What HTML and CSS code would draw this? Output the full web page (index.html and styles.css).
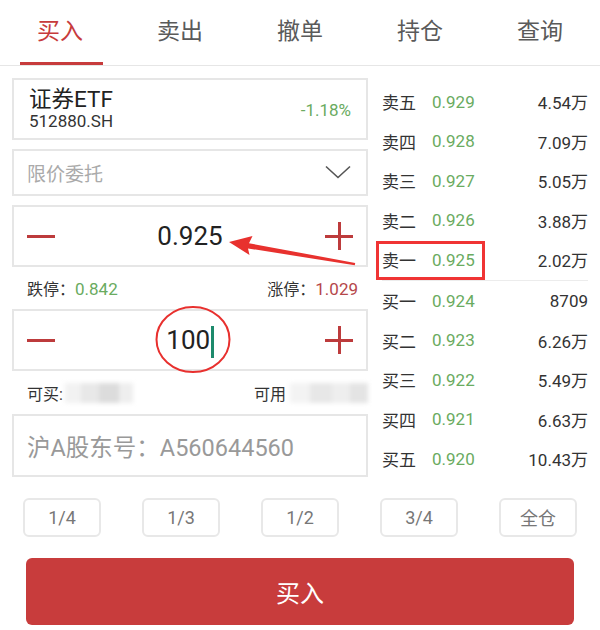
FILE: index.html
```html
<!DOCTYPE html>
<html lang="zh-CN">
<head>
<meta charset="utf-8">
<title>买入</title>
<link rel="stylesheet" href="styles.css">
</head>
<body>
<div class="tabs">
  <div class="tab active">买入</div>
  <div class="tab">卖出</div>
  <div class="tab">撤单</div>
  <div class="tab">持仓</div>
  <div class="tab">查询</div>
</div>

<div class="main">
  <div class="left">
    <div class="box stock">
      <div class="stock-info">
        <div class="stock-name">证券ETF</div>
        <div class="stock-code">512880.SH</div>
      </div>
      <div class="stock-chg">-1.18%</div>
    </div>

    <div class="box type">
      <span class="type-text">限价委托</span>
      <svg class="chev" width="26" height="14" viewBox="0 0 26 14"><path d="M1 1.5 L13 12.5 L25 1.5" fill="none" stroke="#555" stroke-width="1.6"/></svg>
    </div>

    <div class="box stepper">
      <span class="minus"></span>
      <span class="value">0.925</span>
      <span class="plus"></span>
    </div>

    <div class="limits">
      <span class="lim">跌停：<span class="green">0.842</span></span>
      <span class="lim">涨停：<span class="red">1.029</span></span>
    </div>

    <div class="box stepper">
      <span class="minus"></span>
      <span class="value">100<span class="cursor"></span></span>
      <span class="plus"></span>
    </div>

    <div class="avail">
      <span class="av">可买:<span class="blur b1"><i></i><i></i><i></i><i></i></span></span>
      <span class="av">可用<span class="blur b2"><i></i><i></i><i></i><i></i></span></span>
    </div>

    <div class="box account">沪A股东号：A560644560</div>

    <svg class="marks" width="356" height="411" viewBox="12 66 356 411">
      <polygon points="229,242 252.5,236 249,243.2 355.2,263 354.8,265.2 248,248.4 249.5,255" fill="#e8312e"/>
      <ellipse cx="193" cy="339.5" rx="36.5" ry="32.5" fill="none" stroke="#e8302e" stroke-width="2"/>
    </svg>
  </div>

  <div class="book">
    <div class="group">
      <div class="row"><span class="lbl">卖五</span><span class="px">0.929</span><span class="vol">4.54万</span></div>
      <div class="row"><span class="lbl">卖四</span><span class="px">0.928</span><span class="vol">7.09万</span></div>
      <div class="row"><span class="lbl">卖三</span><span class="px">0.927</span><span class="vol">5.05万</span></div>
      <div class="row"><span class="lbl">卖二</span><span class="px">0.926</span><span class="vol">3.88万</span></div>
      <div class="row hl"><span class="lbl">卖一</span><span class="px">0.925</span><span class="vol">2.02万</span><span class="hlbox"></span></div>
    </div>
    <div class="group buy">
      <div class="row"><span class="lbl">买一</span><span class="px">0.924</span><span class="vol">8709</span></div>
      <div class="row"><span class="lbl">买二</span><span class="px">0.923</span><span class="vol">6.26万</span></div>
      <div class="row"><span class="lbl">买三</span><span class="px">0.922</span><span class="vol">5.49万</span></div>
      <div class="row"><span class="lbl">买四</span><span class="px">0.921</span><span class="vol">6.63万</span></div>
      <div class="row"><span class="lbl">买五</span><span class="px">0.920</span><span class="vol">10.43万</span></div>
    </div>
  </div>
</div>

<div class="fractions">
  <div class="frac">1/4</div>
  <div class="frac">1/3</div>
  <div class="frac">1/2</div>
  <div class="frac">3/4</div>
  <div class="frac">全仓</div>
</div>

<div class="buy-btn">买入</div>
</body>
</html>
```

FILE: styles.css
```css
* { box-sizing: border-box; }
html, body { margin: 0; padding: 0; background: #fff; }
body {
  width: 600px;
  height: 630px;
  overflow: hidden;
  font-family: "Roboto", "Noto Sans CJK SC", sans-serif;
  color: #333;
}

/* tabs */
.tabs {
  display: flex;
  height: 66px;
  border-bottom: 1px solid #e6e6e6;
}
.tab {
  flex: 1;
  position: relative;
  display: flex;
  align-items: center;
  justify-content: center;
  padding-bottom: 7px;
  font-size: 23px;
  color: #5a5a5a;
}
.tab.active { color: #c73b3c; }
.tab.active::after {
  content: "";
  position: absolute;
  left: 20px;
  bottom: 0;
  width: 83px;
  height: 3px;
  background: #c73b3c;
}

/* main area */
.main {
  display: flex;
}
.left {
  position: relative;
  width: 356px;
  margin-left: 12px;
  padding-top: 12px;
}
.box {
  border: 2px solid #e6e6e6;
  display: flex;
  align-items: center;
}
.stock {
  height: 62px;
  padding: 7px 15px 0 15px;
  align-items: flex-start;
  justify-content: space-between;
}
.stock-name { font-size: 22.5px; line-height: 24px; color: #222; }
.stock-code { font-size: 17px; line-height: 20px; color: #333; }
.stock-chg {
  align-self: center;
  margin-top: -5px;
  font-size: 17px;
  color: #6aab5f;
}

.type {
  margin-top: 9px;
  height: 47px;
  padding: 0 15px 0 13px;
  justify-content: space-between;
}
.type-text { font-size: 19px; color: #aaa; }
.chev { display: block; margin-top: -2px; }

.stepper {
  height: 62px;
  padding: 0 13px;
  justify-content: space-between;
}
.type + .stepper { margin-top: 9px; }
.minus {
  width: 28px;
  height: 28px;
  background: linear-gradient(#bd3b3c, #bd3b3c) center / 28px 3px no-repeat;
}
.plus {
  width: 28px;
  height: 28px;
  background:
    linear-gradient(#bd3b3c, #bd3b3c) center / 28px 3px no-repeat,
    linear-gradient(#bd3b3c, #bd3b3c) center / 3px 28px no-repeat;
}
.value {
  display: inline-flex;
  align-items: center;
  font-size: 26px;
  color: #222;
}
.cursor {
  display: inline-block;
  width: 2.5px;
  height: 32px;
  margin-left: 1px;
  margin-top: 4px;
  background: #1d8a6c;
}

.limits {
  height: 42px;
  display: flex;
  align-items: center;
  justify-content: space-between;
  padding: 0 10px 0 15px;
}
.lim { font-size: 16px; color: #333; }
.lim .green, .lim .red { font-size: 17px; }
.green { color: #6aab5f; }
.red { color: #b5474a; }

.avail {
  height: 43px;
  display: flex;
  align-items: center;
  justify-content: space-between;
  padding: 0 0 0 15px;
}
.av {
  display: inline-flex;
  align-items: center;
  font-size: 16px;
  color: #333;
}
.blur {
  display: inline-flex;
  height: 20px;
  margin-left: 2px;
  filter: blur(2px);
}
.blur i { display: block; height: 100%; }
.b1 i:nth-child(1) { width: 16px; background: #f2f2f2; }
.b1 i:nth-child(2) { width: 18px; background: #e8e8e8; }
.b1 i:nth-child(3) { width: 20px; background: #dcdcdc; }
.b1 i:nth-child(4) { width: 14px; background: #eeeeee; }
.b2 { margin-left: 4px; }
.b2 i:nth-child(1) { width: 20px; background: #f3f3f3; }
.b2 i:nth-child(2) { width: 22px; background: #e7e7e7; }
.b2 i:nth-child(3) { width: 18px; background: #eeeeee; }
.b2 i:nth-child(4) { width: 18px; background: #e4e4e4; }

.account {
  height: 63px;
  padding-left: 13px;
  font-size: 23.5px;
  color: #999;
}

.marks {
  position: absolute;
  left: 0;
  top: 0;
  pointer-events: none;
}

/* order book */
.book {
  width: 216px;
  margin-left: 8px;
  padding: 16px 4px 0 6px;
}
.group.buy { border-top: 1px solid #ececec; padding-top: 0.5px; }
.row {
  position: relative;
  height: 39.5px;
  display: flex;
  align-items: center;
  font-size: 17px;
}
.lbl { width: 50px; color: #333; }
.px { flex: 1; color: #6aab5f; }
.vol { color: #333; }
.hlbox {
  position: absolute;
  left: -6px;
  top: 1px;
  width: 109px;
  height: 39px;
  border: 3px solid #f03434;
}

/* fraction buttons */
.fractions {
  display: flex;
  justify-content: space-between;
  padding: 0 23px;
  margin-top: 19px;
}
.frac {
  width: 78px;
  height: 39px;
  border: 2px solid #e8e8e8;
  border-radius: 6px;
  display: flex;
  align-items: center;
  justify-content: center;
  font-size: 18px;
  color: #777;
}

.buy-btn {
  margin: 21px 26px 0;
  height: 67px;
  border-radius: 6px;
  background: #c83c3c;
  color: #fff;
  font-size: 24px;
  display: flex;
  align-items: center;
  justify-content: center;
}
```
